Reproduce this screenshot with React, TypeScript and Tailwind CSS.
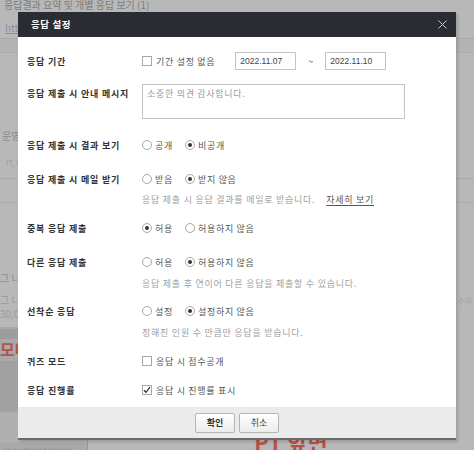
import React from "react";

const Radio = ({ checked }: { checked?: boolean }) => (
  <span className="w-[10px] h-[10px] rounded-full border border-[#a8a8a8] bg-white flex items-center justify-center shrink-0">
    {checked && <span className="w-[4px] h-[4px] rounded-full bg-[#333]" />}
  </span>
);

const Check = ({ checked }: { checked?: boolean }) => (
  <span className="w-[10px] h-[10px] border border-[#a8a8a8] bg-white flex items-center justify-center shrink-0">
    {checked && (
      <svg width="8" height="8" viewBox="0 0 8 8">
        <path d="M1 4.2 L3 6.3 L7 1.2" fill="none" stroke="#333" strokeWidth="1.3" />
      </svg>
    )}
  </span>
);

const Opt = ({ checked, label }: { checked?: boolean; label: string }) => (
  <span className="flex items-center gap-[3px] text-[#555] tracking-[0.7px]">
    <Radio checked={checked} />
    <span>{label}</span>
  </span>
);

const Label = ({ children }: { children: React.ReactNode }) => (
  <div className="w-[115px] h-[18px] flex items-center font-bold text-[#333] shrink-0 tracking-[0.8px]">{children}</div>
);

const Helper = ({ children }: { children: React.ReactNode }) => (
  <div className="h-[18px] flex items-center text-[#a0a0a0] tracking-[0.75px]">{children}</div>
);

export default function App() {
  return (
    <div className="relative w-[474px] h-[450px] overflow-hidden bg-[#b8b8b8] font-['Noto_Sans_CJK_KR',sans-serif] text-[9px]">
      {/* background page (dimmed) */}
      <div className="flex flex-col text-[#8e8e8e] text-[10px] leading-none">
        <div className="h-[10px] pl-[4px] text-[#7c7c7c]">응답결과 요약 및 개별 응답 보기 (1)</div>
        <div className="h-[23px] flex items-end pl-[5px] text-[#8a8fa0] underline">http</div>
        <div className="h-[6px] border-b border-[#a9a9a9]" />
        <div className="h-[14px] bg-[#b3b3b3] border-b border-[#ababab]" />
        <div className="h-[88px] flex items-end pl-[2px] text-[#8a8a8a]">운영</div>
        <div className="h-[26px] flex items-end pl-[6px] text-[8px] text-[#a0a0a0]">IT, C</div>
        <div className="h-[12px] border-b border-[#a8a8a8]" />
        <div className="h-[24px] border-b border-[#acacac]" />
        <div className="h-[80px] flex items-end text-[#8e8e8e]">그 나</div>
        <div className="flex justify-between">
          <div className="flex flex-col">
            <div className="h-[22px] flex items-end text-[#9a9a9a]">그 나</div>
            <div className="h-[14px] flex items-end text-[#9a9a9a]">30,0</div>
          </div>
          <div className="h-[22px] flex items-end pr-[2px] text-[#a0a0a0] text-[8px]">수하</div>
        </div>
        <div className="flex mt-[8px]">
          <div className="w-[88px] h-[130px] bg-[#a9a9a9] border-r border-[#999] flex flex-col">
            <div className="h-[10px] mt-[2px] bg-[#9d9d9d]" />
            <div className="text-[#b5544e] font-bold text-[16px] mt-[2px]">모바</div>
            <div className="h-[50px] bg-[#a1a1a1] mt-[4px]" />
            <div className="h-[30px] bg-[#b0b0b0] mt-[2px]" />
            <div className="text-[5px] text-[#888] mt-[4px] pl-[2px]">내기 솔시 전자가나 관리 자세 보고</div>
          </div>
          <div className="flex-1 flex justify-center pt-[103px]">
            <div className="text-[#b9504a] font-bold text-[22px] leading-none pl-[20px]">PT 앞면</div>
          </div>
        </div>
      </div>

      {/* modal */}
      <div className="absolute left-[18px] top-[12px] w-[438px] h-[428px] bg-white flex flex-col border-b-2 border-[#6b6b6b] shadow-[2px_2px_3px_rgba(0,0,0,0.15)]">
        <div className="h-[25px] bg-[#2a2c33] flex items-center justify-between pl-[13px] pr-[9px] shrink-0">
          <span className="text-white font-bold text-[9.5px] tracking-[0.6px]">응답 설정</span>
          <svg width="9" height="9" viewBox="0 0 9 9">
            <path d="M0.5 0.5 L8.5 8.5 M8.5 0.5 L0.5 8.5" stroke="#c9cad0" strokeWidth="1" />
          </svg>
        </div>

        <div className="flex-1 flex flex-col pl-[9px] leading-none">
          <div className="flex mt-[15px]">
            <Label>응답 기간</Label>
            <div className="flex items-center h-[18px] text-[#555]">
              <Check />
              <span className="ml-[4px] tracking-[0.7px]">기간 설정 없음</span>
              <div className="ml-[20px] w-[61px] h-[18px] border border-[#c4c4c4] flex items-center pl-[4px] text-[#444] font-['Liberation_Sans',sans-serif] text-[8.5px]">2022.11.07</div>
              <span className="w-[29px] text-center text-[#444]">~</span>
              <div className="w-[61px] h-[18px] border border-[#c4c4c4] flex items-center pl-[4px] text-[#444] font-['Liberation_Sans',sans-serif] text-[8.5px]">2022.11.10</div>
            </div>
          </div>

          <div className="flex mt-[14px]">
            <Label>응답 제출 시 안내 메시지</Label>
            <div className="w-[263px] h-[35px] border border-[#c4c4c4] pl-[4px] pt-[4px] text-[#9a9a9a] tracking-[0.7px]">소중한 의견 감사합니다.</div>
          </div>

          <div className="flex mt-[17px]">
            <Label>응답 제출 시 결과 보기</Label>
            <div className="flex items-center h-[18px] gap-[12px]">
              <Opt label="공개" />
              <Opt checked label="비공개" />
            </div>
          </div>

          <div className="flex mt-[16px]">
            <Label>응답 제출 시 메일 받기</Label>
            <div className="flex flex-col">
              <div className="flex items-center h-[18px] gap-[12px]">
                <Opt label="받음" />
                <Opt checked label="받지 않음" />
              </div>
              <div className="mt-[2px] flex items-center">
                <Helper>응답 제출 시 응답 결과를 메일로 받습니다.</Helper>
                <span className="ml-[11px] text-[#555] underline underline-offset-2 tracking-[0.7px]">자세히 보기</span>
              </div>
            </div>
          </div>

          <div className="flex mt-[11px]">
            <Label>중복 응답 제출</Label>
            <div className="flex items-center h-[18px] gap-[12px]">
              <Opt checked label="허용" />
              <Opt label="허용하지 않음" />
            </div>
          </div>

          <div className="flex mt-[16px]">
            <Label>다른 응답 제출</Label>
            <div className="flex flex-col">
              <div className="flex items-center h-[18px] gap-[12px]">
                <Opt label="허용" />
                <Opt checked label="허용하지 않음" />
              </div>
              <div className="mt-[3px]">
                <Helper>응답 제출 후 연이어 다른 응답을 제출할 수 있습니다.</Helper>
              </div>
            </div>
          </div>

          <div className="flex mt-[10px]">
            <Label>선착순 응답</Label>
            <div className="flex flex-col">
              <div className="flex items-center h-[18px] gap-[12px]">
                <Opt label="설정" />
                <Opt checked label="설정하지 않음" />
              </div>
              <div className="mt-[3px]">
                <Helper>정해진 인원 수 만큼만 응답을 받습니다.</Helper>
              </div>
            </div>
          </div>

          <div className="flex mt-[11px]">
            <Label>퀴즈 모드</Label>
            <div className="flex items-center h-[18px] gap-[4px] text-[#555] tracking-[0.7px]">
              <Check />
              <span>응답 시 점수공개</span>
            </div>
          </div>

          <div className="flex mt-[11px]">
            <Label>응답 진행률</Label>
            <div className="flex items-center h-[18px] gap-[4px] text-[#555] tracking-[0.7px]">
              <Check checked />
              <span>응답 시 진행률 표시</span>
            </div>
          </div>
        </div>

        <div className="h-[31px] bg-[#ebebeb] flex items-center justify-center gap-[4px] shrink-0">
          <button className="w-[40px] h-[20px] rounded-[2px] border border-[#b5b5b5] bg-gradient-to-b from-white to-[#ececec] font-bold text-[#333] text-[9px]">확인</button>
          <button className="w-[40px] h-[20px] rounded-[2px] border border-[#b5b5b5] bg-gradient-to-b from-white to-[#ececec] text-[#444] text-[9px]">취소</button>
        </div>
      </div>
    </div>
  );
}
